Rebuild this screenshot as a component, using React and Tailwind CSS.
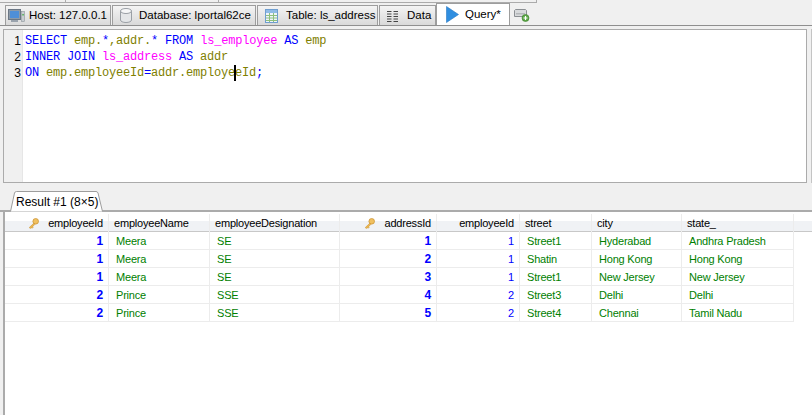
import React from "react";

const uiFont = "font-['Liberation_Sans',Arial,sans-serif]";

const columns = [
  { name: "employeeId", width: "w-[104px]", right: true, bold: true, key: true },
  { name: "employeeName", width: "w-[101px]" },
  { name: "employeeDesignation", width: "w-[130px]" },
  { name: "addressId", width: "w-[97px]", right: true, bold: true, key: true },
  { name: "employeeId", width: "w-[83px]", right: true },
  { name: "street", width: "w-[72px]" },
  { name: "city", width: "w-[90px]" },
  { name: "state_", width: "w-[112px]" },
];

const rows = [
  ["1", "Meera", "SE", "1", "1", "Street1", "Hyderabad", "Andhra Pradesh"],
  ["1", "Meera", "SE", "2", "1", "Shatin", "Hong Kong", "Hong Kong"],
  ["1", "Meera", "SE", "3", "1", "Street1", "New Jersey", "New Jersey"],
  ["2", "Prince", "SSE", "4", "2", "Street3", "Delhi", "Delhi"],
  ["2", "Prince", "SSE", "5", "2", "Street4", "Chennai", "Tamil Nadu"],
];

function HostIcon() {
  return (
    <svg className="shrink-0" width="17" height="14" viewBox="0 0 17 14">
      <rect x="0.5" y="0.5" width="12" height="10" fill="#8d9aa8" stroke="#6b7785" />
      <rect x="2" y="2" width="9" height="7" fill="#4f8fd8" />
      <rect x="3" y="11" width="7" height="2" fill="#9aa3ad" />
      <rect x="13.5" y="2.5" width="3" height="10" fill="#c8cdd2" stroke="#8d949b" strokeWidth="0.6" />
      <rect x="14.3" y="5" width="1.5" height="1.5" fill="#4caf50" />
    </svg>
  );
}

function DatabaseIcon() {
  return (
    <svg className="shrink-0" width="12" height="15" viewBox="0 0 12 15">
      <path d="M0.5 3v9c0 1.4 2.4 2.5 5.5 2.5s5.5-1.1 5.5-2.5V3z" fill="#e4e6e8" stroke="#9a9fa5" />
      <ellipse cx="6" cy="3" rx="5.5" ry="2.5" fill="#f6f7f8" stroke="#9a9fa5" />
    </svg>
  );
}

function TableIcon() {
  return (
    <svg className="shrink-0" width="13" height="14" viewBox="0 0 13 14">
      <rect x="0.5" y="0.5" width="12" height="13" fill="#eef4fb" stroke="#6f9ed0" />
      <rect x="1" y="1" width="11" height="3" fill="#8fbbe6" />
      <path d="M1 6.5h11M1 9h11M1 11.5h11M4.5 4v9M8.5 4v9" stroke="#8ec07c" strokeWidth="1" />
    </svg>
  );
}

function DataIcon() {
  return (
    <svg className="shrink-0" width="11" height="12" viewBox="0 0 11 12">
      <path d="M0 1.5h4.5M6.5 1.5h4.5M0 4h4.5M6.5 4h4.5M0 6.5h4.5M6.5 6.5h4.5M0 9h4.5M6.5 9h4.5M0 11.5h4.5M6.5 11.5h4.5" stroke="#444" strokeWidth="1" />
    </svg>
  );
}

function PlayIcon() {
  return (
    <svg className="shrink-0" width="13" height="17" viewBox="0 0 13 17">
      <path d="M0.5 0.5L12.5 8.5L0.5 16.5z" fill="#2f8ee0" stroke="#2a78c2" strokeWidth="0.6" />
    </svg>
  );
}

function AddTabIcon() {
  return (
    <svg width="16" height="13" viewBox="0 0 16 13">
      <path d="M1.5 0.5h10l1 1v6h-12V1.5z" fill="#d8dadc" stroke="#8b8f93" strokeWidth="1" />
      <rect x="2" y="4" width="9" height="1.5" fill="#b4b7ba" />
      <circle cx="11.5" cy="9" r="3.5" fill="#5aa845" stroke="#3c7f2c" strokeWidth="0.6" />
      <path d="M9.5 9h4M11.5 7v4" stroke="#fff" strokeWidth="1.2" />
    </svg>
  );
}

function KeyIcon() {
  return (
    <svg className="shrink-0" width="11" height="11" viewBox="0 0 11 11">
      <circle cx="7.7" cy="3.3" r="2.8" fill="#f0c060" stroke="#c89030" strokeWidth="0.7" />
      <path d="M6 5L1.2 9.6l1.2 1 1-.9.8.6 1-1-.4-.8L7 6.2z" fill="#eab651" stroke="#c89030" strokeWidth="0.5" />
    </svg>
  );
}

function Tab({ icon, label, className }) {
  return (
    <div className={`flex h-[20px] items-center ${className} border border-b-0 border-[#9d9d9d] bg-gradient-to-b from-[#f4f4f4] to-[#d9d9d9] text-[11.5px] text-black`}>
      {icon}
      <span className="whitespace-nowrap">{label}</span>
    </div>
  );
}

function Kw({ children }) {
  return <span className="text-[#0000ff]">{children}</span>;
}
function Tbl({ children }) {
  return <span className="text-[#ff00ff]">{children}</span>;
}
function Id({ children }) {
  return <span className="text-[#808000]">{children}</span>;
}

function Editor() {
  return (
    <div className="flex h-[154px] w-[804px] border border-[#ababab] bg-white">
      <div className="flex w-[19px] shrink-0 flex-col border-r border-[#e6e6e6] bg-[#f0f0f0] pr-[1px] pt-[3px] text-right text-[12px] leading-[16px] text-black">
        <div>1</div>
        <div>2</div>
        <div>3</div>
      </div>
      <div className="whitespace-pre pl-[2px] pt-[3px] font-['Liberation_Mono',monospace] text-[12px] leading-[16px] tracking-[-0.2px]">
        <div>
          <Kw>SELECT</Kw> <Id>emp.</Id><Kw>*</Kw><Id>,addr.</Id><Kw>*</Kw> <Kw>FROM</Kw> <Tbl>ls_employee</Tbl> <Kw>AS</Kw> <Id>emp</Id>
        </div>
        <div>
          <Kw>INNER JOIN</Kw> <Tbl>ls_address</Tbl> <Kw>AS</Kw> <Id>addr</Id>
        </div>
        <div>
          <Kw>ON</Kw> <Id>emp.employeeId</Id><Kw>=</Kw><Id>addr.employe</Id>
          <span className="relative">
            <span className="absolute left-[-1px] top-[-1px] h-[16px] w-[2px] bg-black" />
          </span>
          <Id>eId</Id><Kw>;</Kw>
        </div>
      </div>
    </div>
  );
}

function ResultTab() {
  return (
    <div className="relative z-10 -mb-[2px] h-[21px] w-[93px] whitespace-nowrap pl-[6px] pt-[2px] text-[12px] leading-[18px] text-black">
      <svg className="absolute left-0 top-0" width="93" height="21" viewBox="0 0 93 21">
        <path d="M0.5 20.5L4.5 2Q5 .5 6.5 .5H86Q87.5 .5 88 2L92.5 20.5" fill="#fff" stroke="#9d9d9d" />
      </svg>
      <span className="relative">Result #1 (8×5)</span>
    </div>
  );
}

function ResultGrid() {
  return (
    <div className="pt-[2px] text-[11px] leading-[18px] tracking-[-0.2px]">
      <div className="flex h-[18px] bg-gradient-to-b from-white from-40% to-[#f0f2f5] to-40% shadow-[inset_0_-1px_0_#c8c8c8]">
        {columns.map((col, i) => (
          <div
            key={i}
            className={`flex items-center gap-[9px] ${col.width} shrink-0 border-r border-[#ececec] px-[5px] text-black ${col.right ? "justify-end" : ""}`}
          >
            {col.key && <KeyIcon />}
            <span>{col.name}</span>
          </div>
        ))}
      </div>
      {rows.map((row, r) => (
        <div key={r} className="flex h-[18px] w-fit border-b border-[#ececec] leading-[19px]">
          {row.map((value, c) => {
            const col = columns[c];
            return (
              <div
                key={c}
                className={`${col.width} shrink-0 border-r border-[#ececec] ${col.right ? "pr-[5px] text-right text-[#0000ff]" : "pl-[7px] text-[#008000]"} ${col.bold ? "text-[12px] font-bold" : ""}`}
              >
                {value}
              </div>
            );
          })}
        </div>
      ))}
    </div>
  );
}

export default function App() {
  return (
    <div className={`flex h-[415px] w-[812px] flex-col overflow-hidden bg-[#f0f0f0] ${uiFont}`}>
      <div className="flex h-[3px] w-[537px] shrink-0 border-b border-r border-[#ababab]">
        <div className="w-[66px] border-r border-[#ababab]" />
        <div className="w-[153px] border-r border-[#ababab]" />
      </div>
      <div className="flex h-[23px] shrink-0 items-end border-b border-[#8f8f8f] pl-[5px]">
        <Tab icon={<HostIcon />} label="Host: 127.0.0.1" className="w-[106px] gap-[4px] pl-[2px]" />
        <div className="w-px" />
        <Tab icon={<DatabaseIcon />} label="Database: lportal62ce" className="w-[144px] gap-[7px] pl-[7px]" />
        <div className="w-px" />
        <Tab icon={<TableIcon />} label="Table: ls_address" className="w-[121px] gap-[8px] pl-[7px]" />
        <div className="w-px" />
        <Tab icon={<DataIcon />} label="Data" className="w-[57px] gap-[9px] pl-[7px]" />
        <div className="flex h-[22px] w-[74px] items-start gap-[6px] border-x border-t border-[#9d9d9d] bg-white pl-[9px] pt-[2px] text-[11.5px] text-black">
          <PlayIcon />
          <span>Query*</span>
        </div>
        <div className="mb-[3px] ml-[4px]">
          <AddTabIcon />
        </div>
      </div>
      <div className="h-[3px] shrink-0" />
      <div className="ml-[3px] flex shrink-0">
        <Editor />
        <div className="ml-[4px] w-px bg-[#c4c4c4]" />
      </div>
      <div className="flex h-[27px] shrink-0 items-end pl-[10px]">
        <ResultTab />
      </div>
      <div className="flex-1 border-t-2 border-[#ababab] pl-[3px]">
        <div className="h-full border-l-2 border-[#ababab] bg-white">
          <ResultGrid />
        </div>
      </div>
    </div>
  );
}
